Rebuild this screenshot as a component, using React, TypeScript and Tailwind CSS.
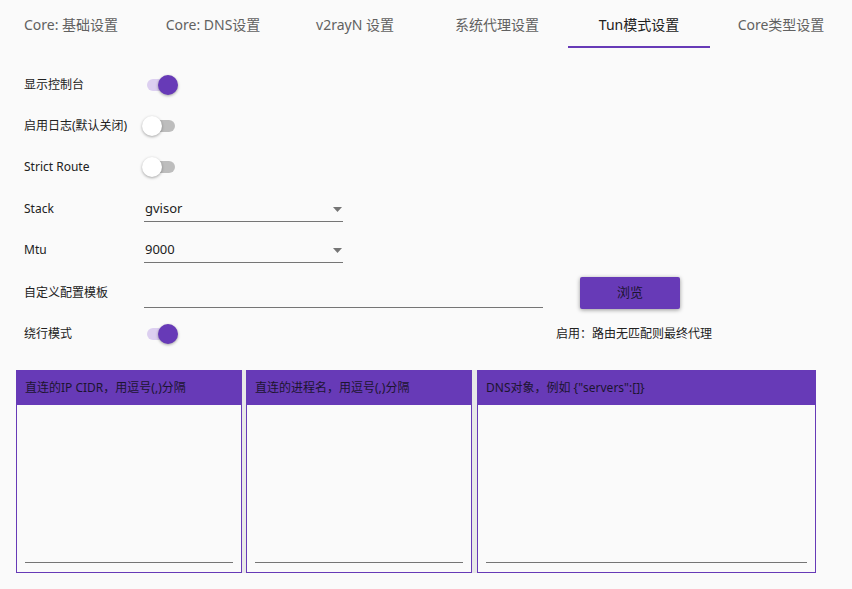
import React, { useState } from 'react';

// ---------------------------------------------------------------------------
// Small pieces
// ---------------------------------------------------------------------------

const tabs = ['Core: 基础设置', 'Core: DNS设置', 'v2rayN 设置', '系统代理设置', 'Tun模式设置', 'Core类型设置'];

const Toggle: React.FC<{ on: boolean; onChange: () => void }> = ({ on, onChange }) => (
  <button onClick={onChange} className="relative w-[36px] h-[20px] shrink-0">
    <span className={`absolute left-[4px] top-[4px] w-[28px] h-[12px] rounded-full ${on ? 'bg-[#dccff0]' : 'bg-[#bdbdbd]'}`} />
    <span
      className={`absolute top-0 w-[20px] h-[20px] rounded-full shadow-[0_1px_3px_rgba(0,0,0,0.35)] ${on ? 'left-[15px] bg-[#673ab7]' : 'left-[-1px] bg-white'}`}
    />
  </button>
);

const Select: React.FC<{ value: string }> = ({ value }) => (
  <div className="w-[199px] h-[24px] border-b border-[#757575] flex items-center justify-between px-[1px]">
    <span className="text-[13px] text-[#212121]">{value}</span>
    <svg width="9" height="5" viewBox="0 0 9 5">
      <path d="M0 0h9L4.5 5z" fill="#757575" />
    </svg>
  </div>
);

const Panel: React.FC<{ title: string; width: string }> = ({ title, width }) => (
  <div className={`${width} h-[203px] border border-[#673ab7] flex flex-col`}>
    <div className="h-[34px] bg-[#673ab7] flex items-center px-[8px] text-[12px] text-[#1c1530] shrink-0">{title}</div>
    <div className="flex-1 flex flex-col justify-end px-[8px] pb-[9px]">
      <div className="border-b border-[#757575]" />
    </div>
  </div>
);

// ---------------------------------------------------------------------------
// Page
// ---------------------------------------------------------------------------

export default function App() {
  const [console_, setConsole] = useState(true);
  const [log, setLog] = useState(false);
  const [strict, setStrict] = useState(false);
  const [bypass, setBypass] = useState(true);

  const row = 'flex items-center h-[41px]';
  const label = 'w-[119px] shrink-0 text-[12px] text-[#212121]';

  return (
    <div
      className="w-[852px] h-[589px] bg-[#fafafa] overflow-hidden"
      style={{ fontFamily: '"Noto Sans", "Noto Sans CJK SC", sans-serif' }}
    >
      {/* Tabs */}
      <div className="grid grid-cols-6 h-[48px]">
        {tabs.map((t, i) => (
          <div key={t} className="relative flex items-center justify-center">
            <span className={`text-[14px] ${i === 4 ? 'text-[#212121]' : 'text-[#616161]'}`}>{t}</span>
            {i === 4 && <span className="absolute left-0 right-0 bottom-0 h-[2px] bg-[#673ab7]" />}
          </div>
        ))}
      </div>

      {/* Settings */}
      <div className="pl-[24px] pt-[16px]">
        <div className={row}>
          <span className={label}>显示控制台</span>
          <Toggle on={console_} onChange={() => setConsole(!console_)} />
        </div>
        <div className={row}>
          <span className={label}>启用日志(默认关闭)</span>
          <Toggle on={log} onChange={() => setLog(!log)} />
        </div>
        <div className={row}>
          <span className={label}>Strict Route</span>
          <Toggle on={strict} onChange={() => setStrict(!strict)} />
        </div>
        <div className={row}>
          <span className={`${label} pt-[2px]`}>Stack</span>
          <div className="ml-[1px] mt-[4px]"><Select value="gvisor" /></div>
        </div>
        <div className={row}>
          <span className={`${label} pt-[2px]`}>Mtu</span>
          <div className="ml-[1px] mt-[4px]"><Select value="9000" /></div>
        </div>
        <div className="grid grid-cols-[119px_400px_174px] items-center h-[47px]">
          <span className="text-[12px] text-[#212121]">自定义配置模板</span>
          <div className="ml-[1px] h-[24px] border-b border-[#757575] mt-[6px]" />
          <div className="flex justify-center">
            <button className="w-[100px] h-[32px] bg-[#673ab7] rounded-[2px] shadow-[0_1px_4px_rgba(0,0,0,0.4)] text-[13px] text-[#1c1530]">
              浏览
            </button>
          </div>
        </div>
        <div className="grid grid-cols-[119px_400px_174px] items-center h-[36px]">
          <span className="text-[12px] text-[#212121]">绕行模式</span>
          <Toggle on={bypass} onChange={() => setBypass(!bypass)} />
          <span className="text-[12px] text-[#212121] text-center pl-[8px]">启用：路由无匹配则最终代理</span>
        </div>
      </div>

      {/* Text panels */}
      <div className="flex pl-[16px] mt-[18px]">
        <Panel title="直连的IP CIDR，用逗号(,)分隔" width="w-[226px]" />
        <div className="w-[4px] h-[203px] bg-[#e8e8e8]" />
        <Panel title="直连的进程名，用逗号(,)分隔" width="w-[226px]" />
        <div className="w-[5px] h-[203px] bg-[#e8e8e8]" />
        <Panel title={'DNS对象，例如 {"servers":[]}'} width="w-[339px]" />
      </div>
    </div>
  );
}
